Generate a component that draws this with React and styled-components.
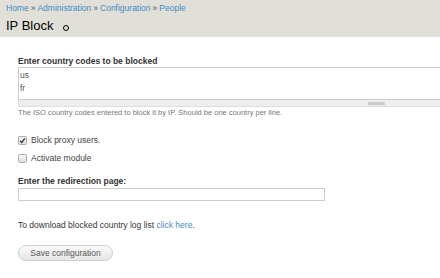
import React from 'react'
import styled, { createGlobalStyle } from 'styled-components'

const Global = createGlobalStyle`
  html, body {
    margin: 0;
    padding: 0;
    background: #fff;
    overflow: hidden;
  }
  body {
    font-family: "Liberation Sans", Arial, sans-serif;
    color: #333;
  }
`

const Page = styled.div`
  width: 440px;
  height: 278px;
  overflow: hidden;
`

const Header = styled.div`
  background-color: #e0e0d8;
  height: 37px;
  padding: 3px 0 0 6px;
  box-sizing: border-box;
`

const Crumbs = styled.div`
  font-size: 8.5px;
  color: #3f8bc4;
  line-height: 10px;

  span {
    color: #555;
    margin: 0 2px;
  }
`

const TitleRow = styled.div`
  display: flex;
  align-items: center;
  margin-top: 5px;
`

const Title = styled.h1`
  margin: 0;
  font-size: 13px;
  font-weight: normal;
  color: #000;
  line-height: 16px;
`

const Ring = styled.span`
  width: 4px;
  height: 4px;
  border: 1.5px solid #000;
  border-radius: 50%;
  margin: 4px 0 0 10px;
`

const Content = styled.div`
  padding: 19px 0 0 18px;
  font-size: 8.5px;
`

const Label = styled.div`
  font-weight: bold;
  font-size: 8.5px;
  color: #333;
  line-height: 10px;
  margin-top: ${p => p.$top || 0}px;
  margin-bottom: ${p => p.$bottom || 0}px;
`

const AreaWrap = styled.div`
  width: 716px;
`

const Area = styled.div`
  border: 1px solid #ccc;
  border-bottom: none;
  padding: 1px 1px 0;
  height: 30px;
  font-size: 8.5px;
  line-height: 13px;
  color: #555;
`

const Grippie = styled.div`
  height: 6px;
  background: #eee;
  border: 1px solid #ddd;
  border-top-color: #ccc;
  display: flex;
  justify-content: center;
  align-items: center;

  &::after {
    content: '';
    width: 17px;
    height: 3px;
    background: #ccc;
  }
`

const Hint = styled.div`
  color: #777;
  font-size: 7.5px;
  margin-top: 1px;
  line-height: 10px;
`

const Check = styled.div`
  display: flex;
  align-items: center;
  font-size: 8.5px;
  color: #444;
  margin-top: ${p => p.$top}px;
  line-height: 10px;
`

const Box = styled.span`
  width: 7px;
  height: 7px;
  border: 1px solid #aaa;
  border-radius: 1.5px;
  background: linear-gradient(#fafafa, #ddd);
  margin-right: 4px;
  display: flex;
  align-items: center;
  justify-content: center;
`

const TextInput = styled.div`
  width: 305px;
  height: 11px;
  border: 1px solid #ccc;
`

const Note = styled.div`
  margin-top: 19px;
  font-size: 8.5px;
  color: #333;
  line-height: 10px;

  a {
    color: #3f8bc4;
    text-decoration: none;
  }
`

const Button = styled.div`
  margin-top: 15px;
  width: 95px;
  height: 16px;
  box-sizing: border-box;
  border: 1px solid #d0d0d0;
  border-radius: 9px;
  background: linear-gradient(#fafafa, #e6e6e6);
  font-size: 8.5px;
  color: #555;
  display: flex;
  align-items: center;
  justify-content: center;
`

function Tick() {
  return (
    <svg width="7" height="7" viewBox="0 0 7 7">
      <path d="M1.2 3.8 L2.8 5.4 L5.9 1.4" stroke="#333" strokeWidth="1.3" fill="none" />
    </svg>
  )
}

export default function App() {
  return (
    <Page>
      <Global />
      <Header>
        <Crumbs>Home<span>»</span>Administration<span>»</span>Configuration<span>»</span>People</Crumbs>
        <TitleRow>
          <Title>IP Block</Title>
          <Ring />
        </TitleRow>
      </Header>
      <Content>
        <Label $bottom={1}>Enter country codes to be blocked</Label>
        <AreaWrap>
          <Area>
            <div>us</div>
            <div>fr</div>
          </Area>
          <Grippie />
        </AreaWrap>
        <Hint>The ISO country codes entered to block it by IP. Should be one country per line.</Hint>
        <Check $top={17}><Box><Tick /></Box>Block proxy users.</Check>
        <Check $top={8}><Box />Activate module</Check>
        <Label $top={13} $bottom={2}>Enter the redirection page:</Label>
        <TextInput />
        <Note>To download blocked country log list <a href="#">click here</a>.</Note>
        <Button>Save configuration</Button>
      </Content>
    </Page>
  )
}
